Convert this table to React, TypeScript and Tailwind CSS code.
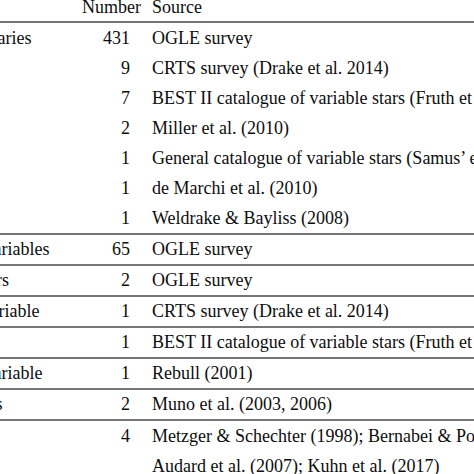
import React from "react";

type Row = { type: string; n: string; src: string };

const firstGroup: Row[] = [
  { type: "Eclipsing binaries", n: "431", src: "OGLE survey" },
  { type: "", n: "9", src: "CRTS survey (Drake et al. 2014)" },
  { type: "", n: "7", src: "BEST II catalogue of variable stars (Fruth et al. 2013)" },
  { type: "", n: "2", src: "Miller et al. (2010)" },
  { type: "", n: "1", src: "General catalogue of variable stars (Samus’ et al. 2017)" },
  { type: "", n: "1", src: "de Marchi et al. (2010)" },
  { type: "", n: "1", src: "Weldrake & Bayliss (2008)" },
];

const groups: Row[][] = [
  [{ type: "Ellipsoidal variables", n: "65", src: "OGLE survey" }],
  [{ type: "RR Lyrae stars", n: "2", src: "OGLE survey" }],
  [{ type: "Rotational variable", n: "1", src: "CRTS survey (Drake et al. 2014)" }],
  [{ type: "Flare star", n: "1", src: "BEST II catalogue of variable stars (Fruth et al. 2013)" }],
  [{ type: "Ellipsoidal variable", n: "1", src: "Rebull (2001)" }],
  [{ type: "X-ray sources", n: "2", src: "Muno et al. (2003, 2006)" }],
  [
    { type: "Wolf-Rayet", n: "4", src: "Metzger & Schechter (1998); Bernabei & Polcaro (2001)" },
    { type: "", n: "", src: "Audard et al. (2007); Kuhn et al. (2017)" },
  ],
];

const TableRow = ({ row, h }: { row: Row; h: string }) => (
  <div className={`flex ml-[-98px] whitespace-nowrap ${h}`}>
    <div className="w-[180px] shrink-0">{row.type}</div>
    <div className="w-[48px] shrink-0 text-right">{row.n}</div>
    <div className="pl-[22px] shrink-0">{row.src}</div>
  </div>
);

const Rule = () => <div className="h-[2px] w-full bg-[#767676]" />;

export default function App() {
  return (
    <div className="w-[474px] h-[474px] overflow-hidden bg-white text-[18px] text-[#0d0d0d] font-['Liberation_Serif','Times_New_Roman',serif]">
      {/* header */}
      <div className="flex ml-[-98px] whitespace-nowrap h-[21px] leading-[14px]">
        <div className="w-[180px] shrink-0">Type</div>
        <div className="w-[48px] shrink-0 text-right">Number</div>
        <div className="pl-[22px] shrink-0">Source</div>
      </div>
      <Rule />
      <div className="leading-[30px]">
        {firstGroup.map((r, i) => (
          <TableRow key={i} row={r} h="h-[30px]" />
        ))}
      </div>
      {groups.map((g, gi) => (
        <div key={gi}>
          <Rule />
          <div className="leading-[29px]">
            {g.map((r, i) => (
              <TableRow key={i} row={r} h={gi === groups.length - 1 ? "h-[30px] leading-[30px]" : "h-[29px]"} />
            ))}
          </div>
        </div>
      ))}
    </div>
  );
}
